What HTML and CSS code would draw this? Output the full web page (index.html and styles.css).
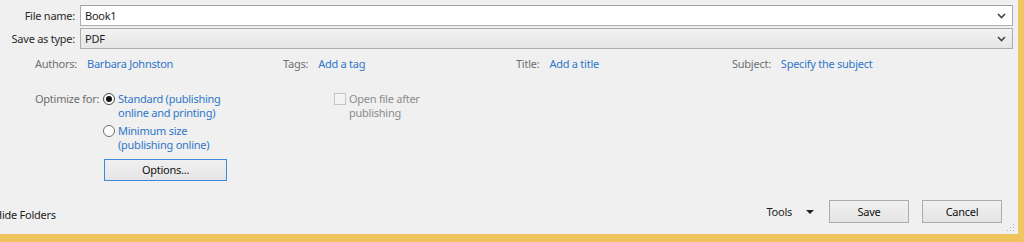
FILE: index.html
```html
<!DOCTYPE html>
<html>
<head>
<meta charset="utf-8">
<link rel="stylesheet" href="styles.css">
</head>
<body>
<div class="dialog">
  <div class="fields">
    <div class="field-row">
      <label class="field-label">File name:</label>
      <div class="input text-input"><span>Book1</span><svg class="chev" width="9" height="6" viewBox="0 0 9 6"><path d="M1 1 L4.5 4.5 L8 1" fill="none" stroke="#444" stroke-width="1.6"/></svg></div>
    </div>
    <div class="field-row">
      <label class="field-label">Save as type:</label>
      <div class="input select-input"><span>PDF</span><svg class="chev" width="9" height="6" viewBox="0 0 9 6"><path d="M1 1 L4.5 4.5 L8 1" fill="none" stroke="#444" stroke-width="1.6"/></svg></div>
    </div>
  </div>

  <div class="meta">
    <div class="meta-item"><span class="meta-label">Authors:</span><span class="link">Barbara Johnston</span></div>
    <div class="meta-item"><span class="meta-label">Tags:</span><span class="link">Add a tag</span></div>
    <div class="meta-item"><span class="meta-label">Title:</span><span class="link">Add a title</span></div>
    <div class="meta-item"><span class="meta-label">Subject:</span><span class="link">Specify the subject</span></div>
  </div>

  <div class="options">
    <div class="opt-label">Optimize for:</div>
    <div class="opt-col">
      <div class="radio-row">
        <span class="radio checked"></span>
        <span class="link">Standard (publishing<br>online and printing)</span>
      </div>
      <div class="radio-row">
        <span class="radio"></span>
        <span class="link">Minimum size<br>(publishing online)</span>
      </div>
      <div class="btn btn-focus opt-btn">Options...</div>
    </div>
    <div class="check-row">
      <span class="checkbox"></span>
      <span class="disabled-text">Open file after<br>publishing</span>
    </div>
  </div>

  <div class="footer">
    <div class="hide-folders">Hide Folders</div>
    <div class="actions">
      <span class="tools">Tools</span>
      <svg class="tools-arrow" width="8" height="4" viewBox="0 0 8 4"><path d="M0 0 H8 L4 4 Z" fill="#222"/></svg>
      <div class="btn action-btn">Save</div>
      <div class="btn action-btn">Cancel</div>
    </div>
  </div>
  <svg class="grip" width="8" height="8" viewBox="0 0 8 8">
    <rect x="6" y="0" width="1" height="1" fill="#b8b8b8"/>
    <rect x="3" y="3" width="1" height="1" fill="#b8b8b8"/>
    <rect x="6" y="3" width="1" height="1" fill="#b8b8b8"/>
    <rect x="0" y="6" width="1" height="1" fill="#b8b8b8"/>
    <rect x="3" y="6" width="1" height="1" fill="#b8b8b8"/>
    <rect x="6" y="6" width="1" height="1" fill="#b8b8b8"/>
  </svg>
</div>
</body>
</html>
```

FILE: styles.css
```css
html, body {
  margin: 0;
  padding: 0;
}
body {
  font-family: "Noto Sans", "Open Sans", sans-serif;
  font-size: 11px;
  letter-spacing: -0.25px;
  color: #1e1e1e;
}
.dialog {
  position: relative;
  width: 1024px;
  height: 242px;
  box-sizing: border-box;
  background: #f0f0f0;
  border-right: 6px solid #f0c660;
  border-bottom: 8px solid #efc35e;
  overflow: hidden;
}
.fields {
  padding-top: 5px;
  display: flex;
  flex-direction: column;
  gap: 2px;
}
.field-row {
  display: flex;
  align-items: center;
}
.field-label {
  width: 80px;
  box-sizing: border-box;
  padding-right: 5px;
  text-align: right;
  color: #2a2a2a;
}
.input {
  width: 933px;
  height: 21px;
  box-sizing: border-box;
  display: flex;
  align-items: center;
  justify-content: space-between;
  padding: 0 6px 0 4px;
  border: 1px solid #b3b3b3;
}
.text-input {
  background: #fff;
  border-color: #abadb3;
  border-top-color: #a0a0a0;
}
.select-input {
  background: linear-gradient(#f2f2f2, #e6e6e6);
  border-color: #acacac;
}
.chev {
  display: block;
}
.meta {
  display: grid;
  grid-template-columns: 248px 233px 216px 1fr;
  padding-left: 35px;
  margin-top: 8px;
  line-height: 14px;
}
.meta-item {
  display: flex;
  gap: 10px;
}
.meta-label {
  color: #6f6f6f;
}
.link {
  color: #2f76c8;
}
.options {
  display: flex;
  padding-left: 35px;
  margin-top: 21px;
  line-height: 14px;
}
.opt-label {
  width: 68px;
  color: #6f6f6f;
}
.opt-col {
  display: flex;
  flex-direction: column;
  width: 231px;
}
.radio-row {
  display: flex;
  gap: 3px;
  align-items: flex-start;
}
.radio-row + .radio-row {
  margin-top: 4px;
}
.radio {
  flex: none;
  width: 12px;
  height: 12px;
  box-sizing: border-box;
  border-radius: 50%;
  border: 1px solid #4a4a4a;
  background: #fdfdfd;
  margin-top: 1px;
  position: relative;
}
.radio.checked::after {
  content: "";
  position: absolute;
  left: 2px;
  top: 2px;
  width: 6px;
  height: 6px;
  border-radius: 50%;
  background: #111;
}
.radio:not(.checked) {
  border-color: #707070;
}
.btn {
  box-sizing: border-box;
  border: 1px solid #acacac;
  background: linear-gradient(#f0f0f0, #e5e5e5);
  text-align: center;
  color: #111;
}
.btn-focus {
  border-color: #3c8ad8;
}
.opt-btn {
  width: 123px;
  height: 22px;
  line-height: 20px;
  margin-top: 7px;
  margin-left: 1px;
}
.check-row {
  display: flex;
  gap: 3px;
}
.checkbox {
  flex: none;
  width: 12px;
  height: 12px;
  box-sizing: border-box;
  border: 1px solid #c4c4c4;
  background: #f4f4f4;
  margin-top: 1px;
}
.disabled-text {
  color: #8c8c8c;
}
.footer {
  display: flex;
  align-items: center;
  justify-content: space-between;
  margin-top: 19px;
}
.hide-folders {
  margin-left: -6px;
  padding-top: 6px;
  color: #1e1e1e;
}
.actions {
  display: flex;
  align-items: center;
  margin-right: 16px;
}
.tools {
  color: #1e1e1e;
}
.tools-arrow {
  margin-left: 14px;
  margin-right: 15px;
}
.action-btn {
  width: 80px;
  height: 23px;
  line-height: 21px;
}
.action-btn + .action-btn {
  margin-left: 13px;
}
.grip {
  position: absolute;
  right: 3px;
  bottom: 2px;
}
```
